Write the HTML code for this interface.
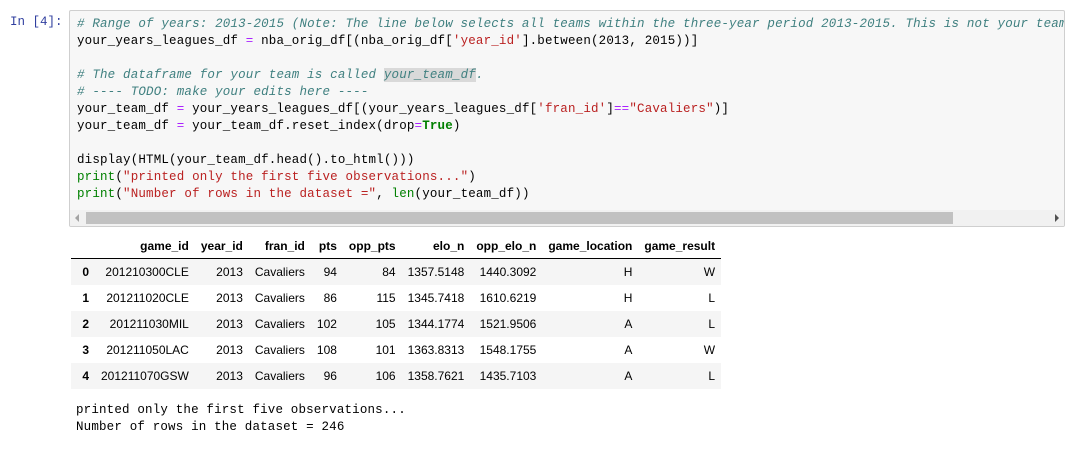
<!DOCTYPE html>
<html><head><meta charset="utf-8"><style>
body{margin:0;width:1080px;height:451px;background:#fff;overflow:hidden;position:relative;font-family:"Liberation Sans",Arial,sans-serif}
.prompt{position:absolute;left:10px;top:14px;font:12.5px/17px "Liberation Mono",monospace;color:#303F9F}
.box{position:absolute;left:69px;top:10px;width:994px;height:215px;background:#f7f7f7;border:1px solid #cfcfcf;border-radius:2px;overflow:hidden}
pre{margin:0;position:absolute;left:7px;top:5px;font:12.5px/17px "Liberation Mono",monospace;letter-spacing:0.17px;color:#000;white-space:pre}
.c{color:#408080;font-style:italic}.o{color:#AA22FF}.s{color:#BA2121}.k{color:#008000}.kb{color:#008000;font-weight:bold}
.hl{background:#d9d9d9}
.sb{position:absolute;left:0;bottom:0;width:994px;height:16px;background:#f1f1f1}
.th{position:absolute;left:16px;top:2px;width:867px;height:12px;background:#c1c1c1}
.al,.ar{position:absolute;top:4px;width:0;height:0;border-top:4px solid transparent;border-bottom:4px solid transparent}
.al{left:5px;border-right:4px solid #a3a3a3}
.ar{right:5px;border-left:4px solid #505050}
table{position:absolute;left:71px;top:234px;border-collapse:collapse;font-size:12px;color:#000}
th{font-weight:bold;text-align:right;padding:0 6px;height:24px;vertical-align:middle;border-bottom:1px solid #000}
td{text-align:right;padding:0 6px;height:26px;vertical-align:middle}
tbody tr:nth-child(odd){background:#f5f5f5}
td.i{font-weight:bold}
.out{position:absolute;left:76px;top:402px;font:12.5px/17px "Liberation Mono",monospace;letter-spacing:0.17px;white-space:pre;margin:0}
</style></head><body>
<div class="prompt">In [4]:</div>
<div class="box">
<pre><span class="c"># Range of years: 2013-2015 (Note: The line below selects all teams within the three-year period 2013-2015. This is not your team's data)</span>
your_years_leagues_df <span class="o">=</span> nba_orig_df[(nba_orig_df[<span class="s">'year_id'</span>].between(2013, 2015))]

<span class="c"># The dataframe for your team is called <span class="hl">your_team_df</span>.</span>
<span class="c"># ---- TODO: make your edits here ----</span>
your_team_df <span class="o">=</span> your_years_leagues_df[(your_years_leagues_df[<span class="s">'fran_id'</span>]<span class="o">==</span><span class="s">"Cavaliers"</span>)]
your_team_df <span class="o">=</span> your_team_df.reset_index(drop<span class="o">=</span><span class="kb">True</span>)

display(HTML(your_team_df.head().to_html()))
<span class="k">print</span>(<span class="s">"printed only the first five observations..."</span>)
<span class="k">print</span>(<span class="s">"Number of rows in the dataset ="</span>, <span class="k">len</span>(your_team_df))</pre>
<div class="sb"><div class="al"></div><div class="th"></div><div class="ar"></div></div>
</div>
<table>
<thead><tr><th style="width:12px"></th><th>game_id</th><th>year_id</th><th>fran_id</th><th>pts</th><th>opp_pts</th><th>elo_n</th><th>opp_elo_n</th><th>game_location</th><th>game_result</th></tr></thead>
<tbody>
<tr><td class="i">0</td><td>201210300CLE</td><td>2013</td><td>Cavaliers</td><td>94</td><td>84</td><td>1357.5148</td><td>1440.3092</td><td>H</td><td>W</td></tr>
<tr><td class="i">1</td><td>201211020CLE</td><td>2013</td><td>Cavaliers</td><td>86</td><td>115</td><td>1345.7418</td><td>1610.6219</td><td>H</td><td>L</td></tr>
<tr><td class="i">2</td><td>201211030MIL</td><td>2013</td><td>Cavaliers</td><td>102</td><td>105</td><td>1344.1774</td><td>1521.9506</td><td>A</td><td>L</td></tr>
<tr><td class="i">3</td><td>201211050LAC</td><td>2013</td><td>Cavaliers</td><td>108</td><td>101</td><td>1363.8313</td><td>1548.1755</td><td>A</td><td>W</td></tr>
<tr><td class="i">4</td><td>201211070GSW</td><td>2013</td><td>Cavaliers</td><td>96</td><td>106</td><td>1358.7621</td><td>1435.7103</td><td>A</td><td>L</td></tr>
</tbody></table>
<pre class="out">printed only the first five observations...
Number of rows in the dataset = 246</pre>
</body></html>
